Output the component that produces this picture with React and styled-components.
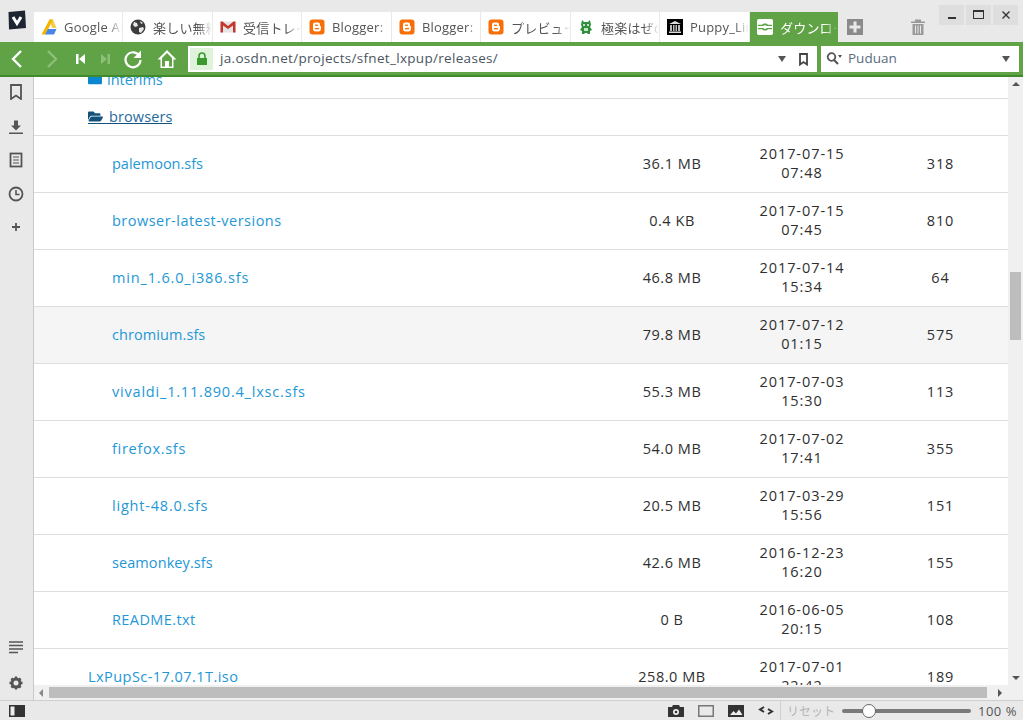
import React from 'react';
import styled, { createGlobalStyle } from 'styled-components';
import { FaFolder, FaFolderOpen } from 'react-icons/fa';

const Global = createGlobalStyle`
  html, body { margin: 0; padding: 0; background: #e9e9e9; }
  body { font-family: "Open Sans", "Noto Sans CJK JP", sans-serif; }
  * { box-sizing: border-box; }
`;

const Win = styled.div`
  width: 1023px; height: 720px; display: flex; flex-direction: column; overflow: hidden; background: #e9e9e9;
`;
const TabStrip = styled.div`
  height: 42px; display: flex; align-items: flex-end; position: relative; flex: none; padding-left: 8px;
`;
const Logo = styled.div`
  width: 18px; height: 20px; margin: 0 8px 12px 0; display: flex;
`;
const Tab = styled.div`
  width: ${p => p.$w}px; height: 30px; margin-right: 1px; flex: none; padding: 0 0 0 7px; display: flex; align-items: center; gap: 7px;
  background: ${p => (p.$active ? '#5fa346' : '#fff')};
  color: ${p => (p.$active ? '#fff' : '#555')};
  font-size: 13px; overflow: hidden;
`;
const FavSlot = styled.div`
  width: 16px; height: 16px; flex: none; display: flex;
`;
const TabLabel = styled.span`
  white-space: nowrap; overflow: hidden; flex: 1; min-width: 0; letter-spacing: 0.2px;
  -webkit-mask-image: linear-gradient(to right, #000 76%, transparent 100%);
  mask-image: linear-gradient(to right, #000 76%, transparent 100%);
`;
const StripButton = styled.div`
  width: 16px; height: 16px; margin: 0 0 7px ${p => p.$ml}px; flex: none; display: flex;
`;
const WindowButtons = styled.div`
  position: absolute; top: 5px; right: 5px; display: flex; gap: 2px;
`;
const WindowButton = styled.div`
  width: 25px; height: 20px; background: #dedede; display: flex; align-items: center; justify-content: center;
`;
const AddressBar = styled.div`
  height: 35px; flex: none; background: #5fa346; border-bottom: 2px solid #3f8a2c; display: flex; align-items: center;
  padding: 1px 4px 0 0;
`;
const NavButton = styled.div`
  width: 20px; height: 20px; flex: none; margin-left: ${p => p.$ml}px; display: flex;
`;
const UrlBox = styled.div`
  width: 629px; height: 26px; margin-left: 11px; background: #fff; display: flex; align-items: center; padding: 0 9px 0 2px; flex: none;
`;
const LockChip = styled.div`
  width: 23px; height: 22px; background: #def3d9; display: flex; align-items: center; justify-content: center; flex: none;
`;
const UrlText = styled.span`
  margin-left: 7px; flex: 1; font-size: 13.5px; letter-spacing: 0.31px; color: #4a5560; white-space: nowrap; padding-bottom: 2px;
`;
const SearchBox = styled.div`
  width: 198px; height: 26px; margin-left: 4px; background: #fff; display: flex; align-items: center; padding: 0 9px 0 5px; flex: none;
`;
const SearchText = styled.span`
  margin-left: 6px; flex: 1; font-size: 13.5px; color: #5a6b80; padding-bottom: 2px;
`;
const Caret = styled.div`
  width: 0; height: 0; border-left: 4px solid transparent; border-right: 4px solid transparent; border-top: 6px solid #555; flex: none;
  margin-right: ${p => p.$mr || 0}px;
`;
const Main = styled.div`
  flex: 1; min-height: 0; display: flex;
`;
const Sidebar = styled.div`
  width: 34px; flex: none; background: #e9e9e9; border-right: 1px solid #c9c9c9; display: flex; flex-direction: column; align-items: center;
  padding: 7px 0 9px;
`;
const SideIcon = styled.div`
  width: 16px; height: 16px; flex: none; margin-bottom: ${p => p.$mb}px; display: flex; margin-right: 1px;
`;
const Spacer = styled.div` flex: 1; `;
const Pane = styled.div`
  flex: 1; min-width: 0; display: flex; flex-direction: column;
`;
const PaneTop = styled.div`
  flex: 1; min-height: 0; display: flex;
`;
const Page = styled.div`
  flex: 1; min-width: 0; overflow: hidden; background: #fff;
`;
const List = styled.div`
  margin-top: -15px;
`;
const Row = styled.div`
  display: grid; grid-template-columns: 576px 124px 136px 138px; align-items: center;
  height: ${p => p.$h || 57}px; padding-bottom: 2px; border-bottom: 1px solid #ddd; background: ${p => (p.$hover ? '#f5f5f5' : '#fff')};
  font-size: 14.5px; color: #2f2f2f;
`;
const NameCell = styled.div`
  padding-left: ${p => p.$indent}px; display: flex; align-items: center; white-space: nowrap;
`;
const FileLink = styled.a`
  color: #2497d6; text-decoration: none; letter-spacing: ${p => p.$ls}px;
`;
const ClosedDir = styled.a`
  color: #2497d6; display: flex; align-items: center; gap: 5px;
`;
const OpenDir = styled.a`
  color: #1f6a9c; display: inline-flex; align-items: center; gap: 6px; height: 14px; margin-top: 2px; letter-spacing: 0.1px;
  border-bottom: 1px solid #14527c;
`;
const Size = styled.div`
  text-align: center; white-space: nowrap; letter-spacing: 0.55px;
`;
const Count = styled.div`
  text-align: center; white-space: nowrap; padding-left: 3px; letter-spacing: 0.9px;
`;
const DateCell = styled.div`
  text-align: center; line-height: 19px; letter-spacing: 0.95px;
`;
const VBar = styled.div`
  width: 15px; flex: none; background: #f0f0f0; display: flex; flex-direction: column; align-items: center; padding: 5px 0;
`;
const UpArrow = styled.div`
  width: 0; height: 0; border-left: 4px solid transparent; border-right: 4px solid transparent; border-bottom: 4px solid #555; flex: none;
`;
const DownArrow = styled.div`
  width: 0; height: 0; border-left: 4px solid transparent; border-right: 4px solid transparent; border-top: 4px solid #555; flex: none;
`;
const VThumb = styled.div`
  width: 11px; height: 68px; margin-top: 186px; background: #bdbdbd; flex: none;
`;
const HBar = styled.div`
  height: 15px; flex: none; background: #f0f0f0; display: flex; align-items: center; padding-left: 5px;
`;
const LeftArrow = styled.div`
  width: 0; height: 0; border-top: 4px solid transparent; border-bottom: 4px solid transparent; border-right: 4px solid #888; flex: none;
`;
const RightArrow = styled.div`
  width: 0; height: 0; border-top: 4px solid transparent; border-bottom: 4px solid transparent; border-left: 4px solid #555; flex: none; margin-left: 11px;
`;
const HThumb = styled.div`
  width: 938px; height: 11px; margin-left: 6px; background: #bdbdbd; flex: none;
`;
const Status = styled.div`
  height: 20px; flex: none; border-top: 1px solid #cfcfcf; background: #e9e9e9; display: flex; align-items: center; padding-left: 9px;
`;
const StatusIcon = styled.div`
  width: 16px; height: 12px; flex: none; margin-left: ${p => p.$ml}px; display: flex;
`;
const Divider = styled.div`
  width: 1px; height: 19px; background: #d0d0d0; margin-left: 6px; flex: none;
`;
const Reset = styled.span`
  margin-left: 6px; width: 48px; font-size: 12px; color: #b5b5b5; white-space: nowrap; flex: none;
`;
const Slider = styled.div`
  width: 129px; height: 4px; margin-left: 7px; border-radius: 2px; background: #7a7a7a; position: relative; flex: none;
`;
const Knob = styled.div`
  position: absolute; left: 20px; top: -5px; width: 14px; height: 14px; border-radius: 50%; background: #fff; border: 1px solid #666;
`;
const Zoom = styled.span`
  margin-left: 7px; font-size: 13px; letter-spacing: 0.5px; color: #555; white-space: nowrap;
`;

const Svg = ({ children, vb = '0 0 16 16' }) => (
  <svg width="100%" height="100%" viewBox={vb} fill="none">{children}</svg>
);

const Blogger = () => (
  <Svg>
    <rect x="0.500" y="0.500" width="15" height="15" rx="3" fill="#f96f07" />
    <path d="M6 3.500h3c1.400 0 2 .9 2 2V7c.6 0 1 .3 1 1v1.500C12 11.500 11 12.500 9.500 12.500h-3C5 12.500 4 11.500 4 10V5.500c0-1.200.8-2 2-2z" fill="#fff" />
    <rect x="6" y="5.600" width="3" height="1.300" fill="#f96f07" />
    <rect x="6" y="9" width="4" height="1.300" fill="#f96f07" />
  </Svg>
);
const Drive = () => (
  <Svg>
    <path d="M8.500 0.500h3.500L15.500 9h-4.500z" fill="#f5cf4a" />
    <path d="M8.500 0.500h3.500L4.500 15.500H0.500z" fill="#f4b400" />
    <path d="M7 10h8.500L13 15.500H4z" fill="#4a86e8" />
  </Svg>
);
const Globe = () => (
  <Svg>
    <circle cx="8" cy="8" r="7.500" fill="#3c3c3c" />
    <path d="M4 3l3 1 1 3-3 1-2-2zM9 9l4-1 1 2-3 4-2-1zM10 2l3 2-2 1z" fill="#e8e8e8" />
  </Svg>
);
const Gmail = () => (
  <Svg>
    <rect x="0.500" y="2.500" width="15" height="11" fill="#e4e4e4" />
    <path d="M0.500 13.500V2.500h2L8 7l5.500-4.500h2v11h-2.500V6.500L8 10 3 6.500v7z" fill="#c5372c" />
  </Svg>
);
const Ghost = () => (
  <Svg>
    <path d="M4 1l2 2h4l2-2 1 5-1 2 2 3-2 1v3h-2l-1-1H7l-1 1H4v-3l-2-1 2-3-1-2z" fill="#2f8f3f" />
    <circle cx="6" cy="6" r="1" fill="#fff" /><circle cx="10" cy="6" r="1" fill="#fff" />
    <rect x="6" y="9" width="4" height="3" fill="#bfe8bf" />
  </Svg>
);
const Archive = () => (
  <Svg>
    <rect width="16" height="16" fill="#000" />
    <path d="M8 2l6 3H2z" fill="#ddd" />
    <path d="M3 6h2v6H3zM6 6h1.500v6H6zM8.500 6H10v6H8.500zM11 6h2v6h-2z" fill="#bbb" />
    <rect x="2" y="12.500" width="12" height="1.500" fill="#ddd" />
  </Svg>
);
const Download = () => (
  <Svg vb="0 0 18 18">
    <rect x="0" y="0" width="18" height="18" rx="2" fill="#fff" />
    <path d="M1 8V6.500h4.500c1-1 2-1.500 3.500-1.500s2.500.5 3.500 1.500H17V8h-6c-.5-.7-1.200-1-2-1s-1.500.3-2 1zM1 10v1.500h4.500c1 1 2 1.500 3.500 1.500s2.500-.5 3.500-1.500H17V10h-6c-.5.700-1.200 1-2 1s-1.500-.3-2-1z" fill="#5fa346" />
  </Svg>
);

const tabs = [
  { w: 88, t: 'Google Analytics', i: <Drive /> },
  { w: 89, t: '楽しい無料ソフト', i: <Globe /> },
  { w: 88, t: '受信トレイ', i: <Gmail /> },
  { w: 89, t: 'Blogger:', i: <Blogger /> },
  { w: 88, t: 'Blogger:', i: <Blogger /> },
  { w: 89, t: 'プレビュー', i: <Blogger /> },
  { w: 88, t: '極楽はぜの', i: <Ghost /> },
  { w: 89, t: 'Puppy_Linux', i: <Archive /> },
  { w: 88, t: 'ダウンロード', i: <Download />, active: true },
];

const files = [
  ['palemoon.sfs', '36.1 MB', '2017-07-15', '07:48', '318', false, 0],
  ['browser-latest-versions', '0.4 KB', '2017-07-15', '07:45', '810', false, 0.48],
  ['min_1.6.0_i386.sfs', '46.8 MB', '2017-07-14', '15:34', '64', false, 0.83],
  ['chromium.sfs', '79.8 MB', '2017-07-12', '01:15', '575', true, 0.08],
  ['vivaldi_1.11.890.4_lxsc.sfs', '55.3 MB', '2017-07-03', '15:30', '113', false, 0.8],
  ['firefox.sfs', '54.0 MB', '2017-07-02', '17:41', '355', false, 0.7],
  ['light-48.0.sfs', '20.5 MB', '2017-03-29', '15:56', '151', false, 0.8],
  ['seamonkey.sfs', '42.6 MB', '2016-12-23', '16:20', '155', false, 0.08],
  ['README.txt', '0 B', '2016-06-05', '20:15', '108', false, 0.4],
];

export default function App() {
  return (
    <Win>
      <Global />
      <TabStrip>
        <Logo>
          <Svg vb="0 0 18 20">
            <path d="M0.500 2L17 0.500 18 18l-17 1.500z" fill="#1f2433" />
            <path d="M5 7l4 6.500L13 7" stroke="#fff" strokeWidth="3" />
          </Svg>
        </Logo>
        {tabs.map((t, i) => (
          <Tab key={i} $w={t.w} $active={t.active}>
            <FavSlot>{t.i}</FavSlot>
            <TabLabel>{t.t}</TabLabel>
          </Tab>
        ))}
        <StripButton $ml={8}>
          <Svg>
            <rect width="16" height="16" fill="#8a8a8a" />
            <path d="M6.500 2.500h3v4h4v3h-4v4h-3v-4h-4v-3h4z" fill="#e9e9e9" />
          </Svg>
        </StripButton>
        <StripButton $ml={47}>
          <Svg>
            <path d="M5 0.500h6v2h4v1.500H1V2.500h4zM2.500 5h11v11h-11z" fill="#9a9a9a" />
            <path d="M5.500 6.500v8M8 6.500v8M10.500 6.500v8" stroke="#e9e9e9" />
          </Svg>
        </StripButton>
        <WindowButtons>
          <WindowButton>
            <svg width="10" height="10" viewBox="0 0 10 10"><rect x="1" y="7" width="8" height="2" fill="#333" /></svg>
          </WindowButton>
          <WindowButton>
            <svg width="11" height="10" viewBox="0 0 11 10"><rect x="0.500" y="0.500" width="10" height="8" stroke="#333" fill="none" /><rect x="0" y="0" width="11" height="2" fill="#333" /></svg>
          </WindowButton>
          <WindowButton>
            <svg width="10" height="10" viewBox="0 0 10 10"><path d="M1.500 1.500l7 7M8.500 1.500l-7 7" stroke="#333" strokeWidth="1.400" /></svg>
          </WindowButton>
        </WindowButtons>
      </TabStrip>

      <AddressBar>
        <NavButton $ml={7}>
          <Svg vb="0 0 20 20"><path d="M14 2l-8 8 8 8" stroke="#fff" strokeWidth="2.400" /></Svg>
        </NavButton>
        <NavButton $ml={15}>
          <Svg vb="0 0 20 20"><path d="M6 2l8 8-8 8" stroke="#8cc078" strokeWidth="2.400" /></Svg>
        </NavButton>
        <NavButton $ml={8}>
          <Svg vb="0 0 20 20"><path d="M6 5h2.500v10H6zM15 5v10l-6-5z" fill="#fff" /></Svg>
        </NavButton>
        <NavButton $ml={6}>
          <Svg vb="0 0 20 20"><path d="M5 5v10l6-5zM11.500 5H14v10h-2.500z" fill="#8cc078" /></Svg>
        </NavButton>
        <NavButton $ml={7}>
          <Svg vb="0 0 20 20"><path d="M16.500 7A7.500 7.500 0 1 0 17.500 11" stroke="#fff" strokeWidth="2.200" /><path d="M18 1.500V9h-7.500z" fill="#fff" /></Svg>
        </NavButton>
        <NavButton $ml={14}>
          <Svg vb="0 0 20 20"><path d="M10 1L0.500 10.500h3V19h13v-8.500h3z" fill="#fff" /><path d="M10 4L5 9v8.500h3V12h4v5.500h3V9z" fill="#5fa346" /></Svg>
        </NavButton>
        <UrlBox>
          <LockChip>
            <svg width="12" height="14" viewBox="0 0 12 14"><path d="M3 6V4a3 3 0 0 1 6 0v2" stroke="#3a9a2e" strokeWidth="1.600" fill="none" /><rect x="1" y="6" width="10" height="7" fill="#3a9a2e" /></svg>
          </LockChip>
          <UrlText>ja.osdn.net/projects/sfnet_lxpup/releases/</UrlText>
          <Caret $mr={13} />
          <svg width="9" height="13" viewBox="0 0 9 13"><path d="M1 1h7v10.500L4.500 9 1 11.500z" stroke="#444" strokeWidth="1.800" fill="none" /></svg>
        </UrlBox>
        <SearchBox>
          <svg width="16" height="14" viewBox="0 0 16 14"><circle cx="5.500" cy="5" r="3.800" stroke="#555" strokeWidth="1.800" fill="none" /><path d="M8 8l4 4" stroke="#555" strokeWidth="2.200" /><path d="M12 3h4l-2 3z" fill="#555" /></svg>
          <SearchText>Puduan</SearchText>
          <Caret />
        </SearchBox>
      </AddressBar>

      <Main>
        <Sidebar>
          <SideIcon $mb={18}><Svg><path d="M3 1h10v14l-5-3.500L3 15z" stroke="#555" strokeWidth="1.800" /></Svg></SideIcon>
          <SideIcon $mb={18}><Svg><path d="M6 2.500h4v5h3l-5 5-5-5h3z" fill="#555" /><rect x="1" y="14.500" width="14" height="1.500" fill="#555" /></Svg></SideIcon>
          <SideIcon $mb={18}><Svg><rect x="2.500" y="1.500" width="11" height="13" stroke="#555" strokeWidth="1.800" /><path d="M5 5h6M5 8h6M5 11h6" stroke="#555" strokeWidth="1.200" /></Svg></SideIcon>
          <SideIcon $mb={17}><Svg><circle cx="8" cy="8" r="6.500" stroke="#555" strokeWidth="1.800" /><path d="M8 4v4.500h3.500" stroke="#555" strokeWidth="1.600" /></Svg></SideIcon>
          <SideIcon $mb={0}><Svg><path d="M8 4v8M4 8h8" stroke="#555" strokeWidth="1.800" /></Svg></SideIcon>
          <Spacer />
          <SideIcon $mb={20}><Svg><path d="M1 3h14M1 6.500h14M1 10h14M1 13.500h9" stroke="#555" strokeWidth="1.600" /></Svg></SideIcon>
          <SideIcon $mb={0}>
            <Svg><circle cx="8" cy="8" r="4" stroke="#555" strokeWidth="3" /><path d="M8 1.500v3M8 11.500v3M1.500 8h3M11.500 8h3M3.400 3.400l2 2M10.600 10.600l2 2M12.600 3.400l-2 2M5.400 10.600l-2 2" stroke="#555" strokeWidth="2.400" /></Svg>
          </SideIcon>
        </Sidebar>
        <Pane>
          <PaneTop>
            <Page>
              <List>
                <Row $h={37}>
                  <NameCell $indent={54}>
                    <ClosedDir><FaFolder size={14} color="#0a87cf" />interims</ClosedDir>
                  </NameCell>
                </Row>
                <Row $h={37}>
                  <NameCell $indent={54}>
                    <OpenDir><FaFolderOpen size={15} color="#14527c" />browsers</OpenDir>
                  </NameCell>
                </Row>
                {files.map(f => (
                  <Row key={f[0]} $hover={f[5]}>
                    <NameCell $indent={78}><FileLink $ls={f[6]}>{f[0]}</FileLink></NameCell>
                    <Size>{f[1]}</Size>
                    <DateCell>{f[2]}<br />{f[3]}</DateCell>
                    <Count>{f[4]}</Count>
                  </Row>
                ))}
                <Row>
                  <NameCell $indent={54}><FileLink $ls={0.45}>LxPupSc-17.07.1T.iso</FileLink></NameCell>
                  <Size>258.0 MB</Size>
                  <DateCell>2017-07-01<br />22:42</DateCell>
                  <Count>189</Count>
                </Row>
              </List>
            </Page>
            <VBar>
              <UpArrow />
              <VThumb />
              <Spacer />
              <DownArrow />
            </VBar>
          </PaneTop>
          <HBar>
            <LeftArrow />
            <HThumb />
            <RightArrow />
          </HBar>
        </Pane>
      </Main>

      <Status>
        <svg width="16" height="12" viewBox="0 0 16 12"><rect width="16" height="12" fill="#333" /><rect x="1.500" y="1.500" width="4" height="9" fill="#eee" /></svg>
        <StatusIcon $ml={643}><Svg vb="0 0 16 12"><path d="M0 2h4l1-2h6l1 2h4v10H0z" fill="#333" /><circle cx="8" cy="7" r="3" fill="#eee" /><circle cx="8" cy="7" r="1.300" fill="#333" /></Svg></StatusIcon>
        <StatusIcon $ml={14}><Svg vb="0 0 16 12"><rect x="0.750" y="0.750" width="14.500" height="10.500" stroke="#777" strokeWidth="1.500" /></Svg></StatusIcon>
        <StatusIcon $ml={14}><Svg vb="0 0 16 12"><rect width="16" height="12" fill="#333" /><path d="M2 10l3.500-4 2.500 2.500 3-4 3.500 5.500z" fill="#eee" /></Svg></StatusIcon>
        <StatusIcon $ml={14}><Svg vb="0 0 16 12"><path d="M6 2L2 4.500 6 7M10 4l4 2.500L10 9" stroke="#333" strokeWidth="2" /></Svg></StatusIcon>
        <Divider />
        <Reset>リセット</Reset>
        <Slider><Knob /></Slider>
        <Zoom>100 %</Zoom>
      </Status>
    </Win>
  );
}
